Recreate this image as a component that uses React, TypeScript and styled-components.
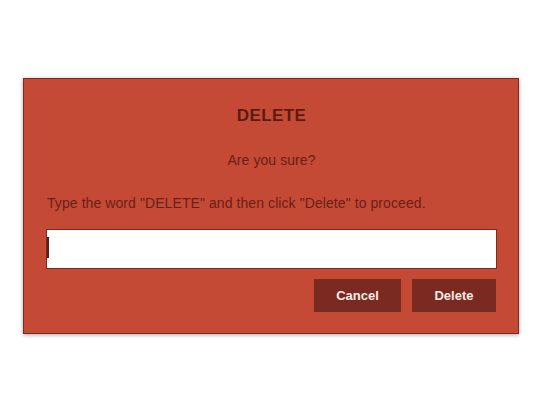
import styled, { createGlobalStyle } from "styled-components";

const GlobalStyle = createGlobalStyle`
  html, body {
    margin: 0;
    padding: 0;
    background: #ffffff;
    font-family: "Liberation Sans", Arial, sans-serif;
  }
`;

const Page = styled.div`
  width: 537px;
  height: 402px;
  padding: 78px 0 0 23px;
  box-sizing: border-box;
`;

const Dialog = styled.div`
  width: 496px;
  box-sizing: border-box;
  background: #c44a35;
  border: 1px solid #7c2a1f;
  box-shadow: 0 1px 4px rgba(0, 0, 0, 0.35);
  padding: 28px 21px 21px 22px;
  display: flex;
  flex-direction: column;
`;

const Title = styled.h2`
  margin: 0;
  font-size: 17px;
  line-height: 18px;
  font-weight: bold;
  letter-spacing: 0.4px;
  text-align: center;
  color: #5c1a12;
`;

const Text = styled.p<{ $center?: boolean }>`
  margin: 27px 0 0;
  font-size: 14px;
  line-height: 16px;
  letter-spacing: 0.08px;
  color: #6a2016;
  text-align: ${(p) => (p.$center ? "center" : "left")};
  padding-left: ${(p) => (p.$center ? "0" : "1px")};
`;

const InputWrap = styled.div`
  position: relative;
  margin-top: 18px;
`;

const Field = styled.input`
  display: block;
  width: 100%;
  height: 40px;
  box-sizing: border-box;
  border: 1px solid #7c2a1f;
  background: #ffffff;
  outline: none;
  padding: 0 6px;
  font-family: inherit;
  font-size: 14px;
  caret-color: transparent;
`;

const Caret = styled.span`
  position: absolute;
  left: 1px;
  top: 8px;
  width: 2px;
  height: 21px;
  background: #5c1a12;
`;

const Actions = styled.div`
  display: flex;
  justify-content: flex-end;
  gap: 11px;
  margin-top: 10px;
  padding-right: 1px;
`;

const ActionButton = styled.button<{ $width: number }>`
  width: ${(p) => p.$width}px;
  height: 33px;
  border: none;
  background: #7a2a20;
  color: #fbeae6;
  font-family: inherit;
  font-size: 13px;
  font-weight: bold;
  cursor: pointer;
  padding: 0;
`;

export default function App() {
  return (
    <>
      <GlobalStyle />
      <Page>
        <Dialog>
          <Title>DELETE</Title>
          <Text $center>Are you sure?</Text>
          <Text>Type the word "DELETE" and then click "Delete" to proceed.</Text>
          <InputWrap>
            <Field type="text" aria-label="Confirm delete" />
            <Caret />
          </InputWrap>
          <Actions>
            <ActionButton $width={87}>Cancel</ActionButton>
            <ActionButton $width={84}>Delete</ActionButton>
          </Actions>
        </Dialog>
      </Page>
    </>
  );
}
